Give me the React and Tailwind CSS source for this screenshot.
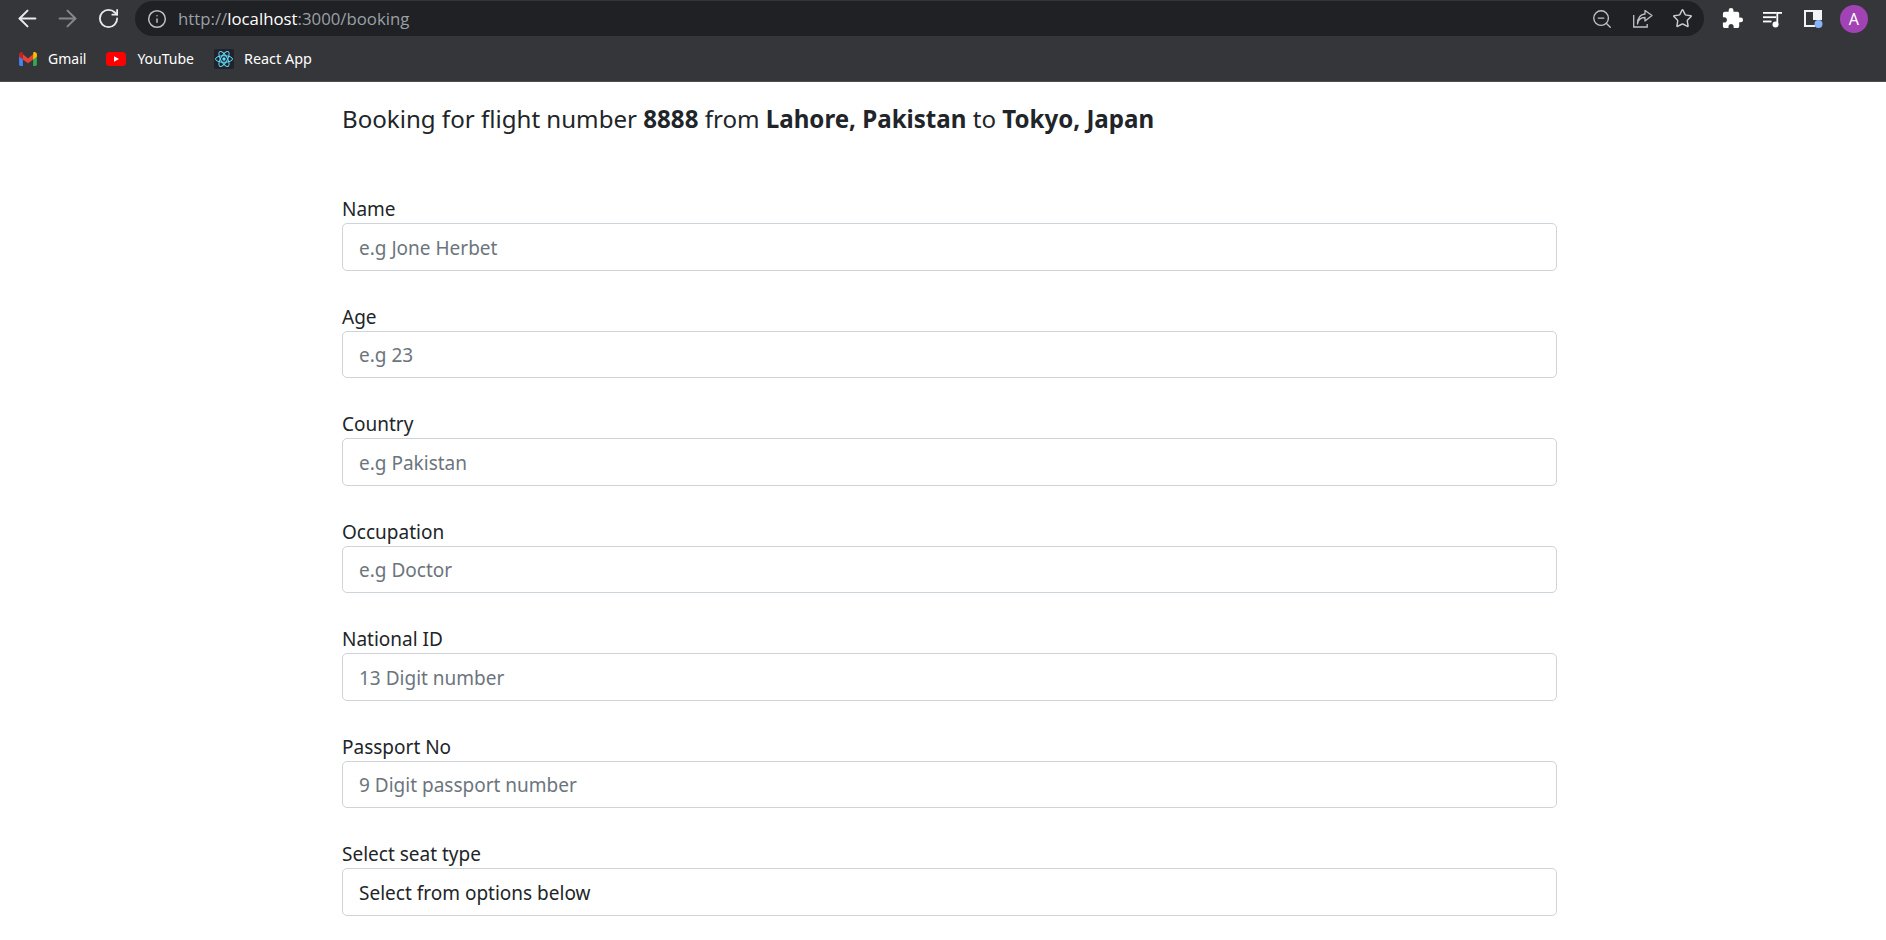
import { ArrowLeft, ArrowRight, RotateCw, Info, ZoomOut, Star } from 'lucide-react';
import { MdExtension } from 'react-icons/md';

const fields = [
    { label: 'Name', placeholder: 'e.g Jone Herbet' },
    { label: 'Age', placeholder: 'e.g 23' },
    { label: 'Country', placeholder: 'e.g Pakistan' },
    { label: 'Occupation', placeholder: 'e.g Doctor' },
    { label: 'National ID', placeholder: '13 Digit number' },
    { label: 'Passport No', placeholder: '9 Digit passport number' },
];

const GmailIcon = () => (
    <svg width="18" height="14" viewBox="0 0 19 15">
        <path d="M0 2v11.5C0 14.300.7 15 1.500 15H4V6z" fill="#4285f4" />
        <path d="M19 2v11.500c0 .8-.7 1.500-1.500 1.500H15V6z" fill="#34a853" />
        <path d="M4 8V2.500L9.500 7 15 2.500V8L9.500 12z" fill="#ea4335" />
        <path d="M0 2.500C0 .5 2.200-.6 3.600.4L4 .8V8L0 5z" fill="#c5221f" />
        <path d="M19 2.500c0-2-2.200-3.100-3.600-2.100L15 .8V8l4-3z" fill="#fbbc04" />
    </svg>
);

const YoutubeIcon = () => (
    <svg width="20" height="14" viewBox="0 0 20 14">
        <rect width="20" height="14" rx="3.500" fill="#ff0000" />
        <path d="M8 4.200v5.600L13 7z" fill="#ffffff" />
    </svg>
);

const ReactIcon = () => (
    <svg width="20" height="20" viewBox="0 0 20 20">
        <rect width="20" height="20" rx="2" fill="#20232a" />
        <circle cx="10" cy="10" r="1.700" fill="#61dafb" />
        <g fill="none" stroke="#61dafb" strokeWidth="1">
            <ellipse cx="10" cy="10" rx="8.500" ry="3.300" />
            <ellipse cx="10" cy="10" rx="8.500" ry="3.300" transform="rotate(60 10 10)" />
            <ellipse cx="10" cy="10" rx="8.500" ry="3.300" transform="rotate(120 10 10)" />
        </g>
    </svg>
);

const ShareIcon = () => (
    <svg width="21" height="21" viewBox="0 0 21 21" fill="none" stroke="#bdc1c6" strokeWidth="1.300">
        <path d="M1.700 7v12h13.500v-3" />
        <path d="M5.500 16c.5-4 3.500-6.500 7.500-6.500v3.500l7-5.500L13 2.500V6C8.500 6.500 5.500 10 5.500 16z" strokeLinejoin="round" />
    </svg>
);

const QueueIcon = () => (
    <svg width="20" height="20" viewBox="0 0 20 20" fill="#ffffff">
        <rect x="0" y="3" width="13" height="1.800" />
        <rect x="0" y="7.300" width="13" height="1.800" />
        <rect x="0" y="11.600" width="8.500" height="1.800" />
        <rect x="13.400" y="3" width="1.800" height="13" />
        <rect x="13.400" y="3" width="5.600" height="1.800" />
        <circle cx="12.500" cy="15.500" r="3" />
    </svg>
);

const SidePanelIcon = () => (
    <svg width="20" height="20" viewBox="0 0 20 20">
        <path d="M1 1h18v10h-9V3H3v13h9v2H1z" fill="#f1f3f4" />
        <circle cx="15.500" cy="15" r="4" fill="#8ab4f8" />
    </svg>
);

export default function App() {
    return (
        <div className="h-[940px] overflow-hidden bg-white font-['Noto_Sans',sans-serif] text-[#212529]">
            <div className="h-[82px] bg-[#35363a] border-b border-[#4d4e52]">
                <div className="flex items-center h-[41px] pt-[1px] pb-[5px]">
                    <div className="flex items-center w-[135px] pl-[7px]">
                        <span className="flex justify-center w-[40.5px]"><ArrowLeft size={27} strokeWidth={1.8} className="text-[#e8eaed]" /></span>
                        <span className="flex justify-center w-[40.5px]"><ArrowRight size={27} strokeWidth={1.8} className="text-[#85878a]" /></span>
                        <span className="flex justify-center w-[40.5px]"><RotateCw size={23} strokeWidth={1.9} className="text-[#e8eaed]" /></span>
                    </div>
                    <div className="flex items-center justify-between w-[1569px] h-[35px] rounded-full bg-[#202124] pl-[12px] pr-[1px]">
                        <div className="flex items-center gap-[11px] font-['Open_Sans',sans-serif] text-[16.8px]">
                            <Info size={20} strokeWidth={1.8} className="text-[#bdc1c6]" />
                            <span className="text-[#9aa0a6]">http://<span className="text-white">localhost</span>:3000/booking</span>
                        </div>
                        <div className="flex items-center">
                            <span className="flex justify-center w-[40.5px]"><ZoomOut size={22} strokeWidth={1.5} className="text-[#bdc1c6]" /></span>
                            <span className="flex justify-center w-[40.5px]"><ShareIcon /></span>
                            <span className="flex justify-center w-[40.5px]"><Star size={21} strokeWidth={1.7} className="text-[#c7cacf]" /></span>
                        </div>
                    </div>
                    <div className="flex items-center pl-[8px]">
                        <span className="flex justify-center w-[40.5px]"><MdExtension size={23} className="text-white" /></span>
                        <span className="flex justify-center w-[40.5px]"><QueueIcon /></span>
                        <span className="flex justify-center w-[40.5px]"><SidePanelIcon /></span>
                        <span className="flex justify-center w-[40.5px]">
                            <span className="flex items-center justify-center w-[28px] h-[28px] rounded-full bg-[#a142b5] text-white text-[16px]">A</span>
                        </span>
                    </div>
                </div>
                <div className="flex items-center h-[35px] pl-[19px] text-white text-[14px]">
                    <GmailIcon />
                    <span className="ml-[11px]">Gmail</span>
                    <span className="ml-[20px]"><YoutubeIcon /></span>
                    <span className="ml-[11px]">YouTube</span>
                    <span className="ml-[20px]"><ReactIcon /></span>
                    <span className="ml-[10px] text-[14.4px]">React App</span>
                </div>
            </div>
            <div className="ml-[342px] w-[1215px] pt-[19px]">
                <h4 className="text-[24.1px] leading-[36px] mb-[56px]">
                    Booking for flight number <b>8888</b> from <b>Lahore, Pakistan</b> to <b>Tokyo, Japan</b>
                </h4>
                {fields.map((field) => (
                    <div key={field.label} className="mb-[30px]">
                        <label className="block h-[30px] text-[19px] leading-[32px]">{field.label}</label>
                        <input
                            placeholder={field.placeholder}
                            className="block w-full h-[47.5px] px-[16px] pt-[2px] text-[19px] border border-[#ced4da] rounded-[5px] placeholder:text-[#6c757d]"
                        />
                    </div>
                ))}
                <div>
                    <label className="block h-[30px] text-[19px] leading-[32px]">Select seat type</label>
                    <div className="flex items-center w-full h-[47.5px] px-[16px] pt-[2px] text-[19px] border border-[#ced4da] rounded-[5px]">
                        Select from options below
                    </div>
                </div>
            </div>
        </div>
    );
}
